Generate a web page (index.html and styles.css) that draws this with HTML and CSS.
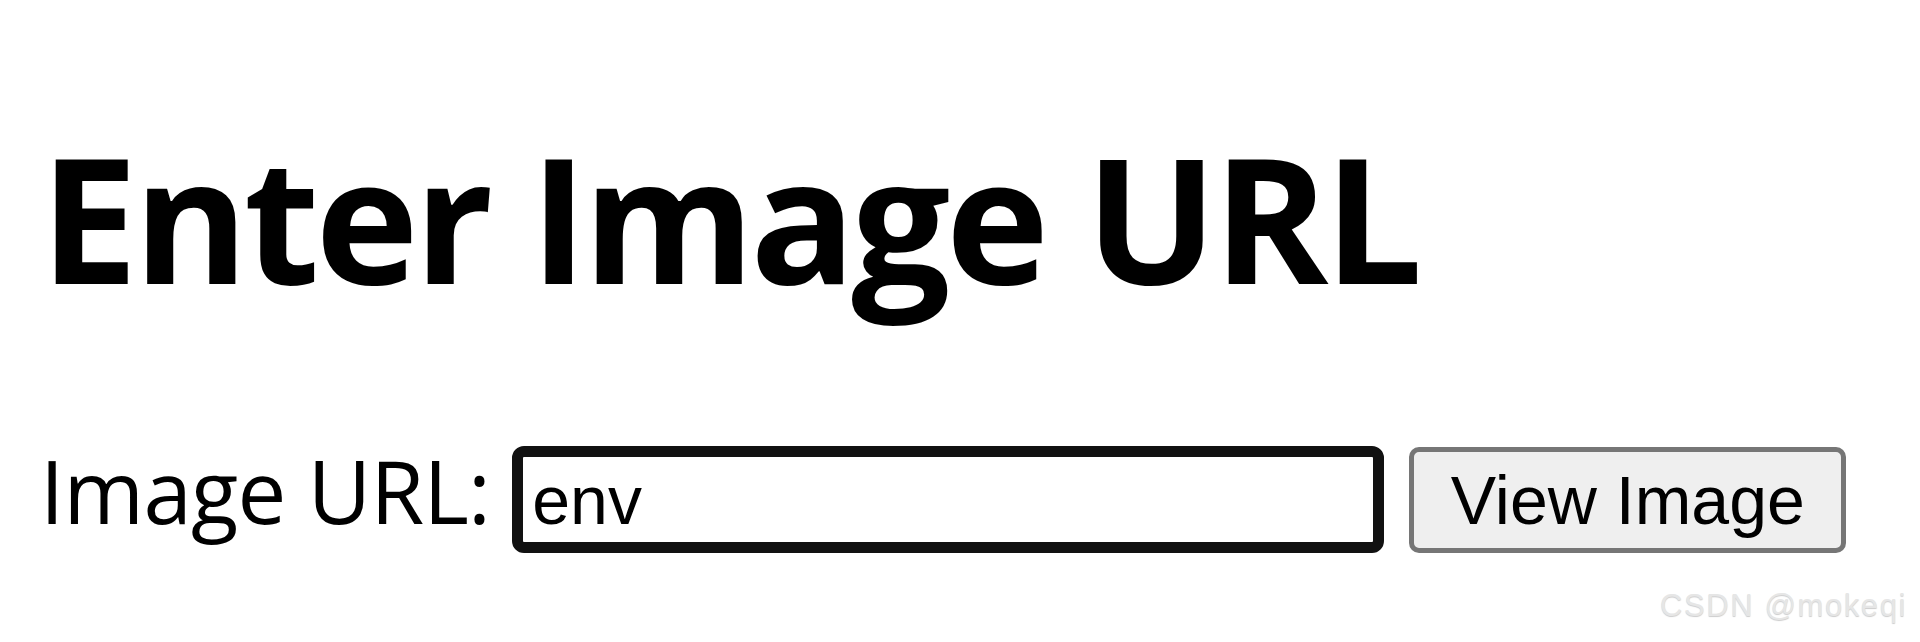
FILE: index.html
```html
<!DOCTYPE html>
<html lang="en">
<head>
<meta charset="utf-8">
<title>Enter Image URL</title>
<link rel="stylesheet" href="styles.css">
</head>
<body>
<main class="page">
  <h1 class="title">Enter Image URL</h1>
  <form class="url-form">
    <label class="url-label" for="url">Image URL:</label>
    <input class="url-input" id="url" type="text" value="env">
    <button class="view-btn" type="button">View Image</button>
  </form>
</main>
<div class="watermark">CSDN @mokeqi</div>
</body>
</html>
```
FILE: styles.css
```css
html, body {
  margin: 0;
  padding: 0;
  background: #ffffff;
}
body {
  width: 1920px;
  height: 642px;
  overflow: hidden;
  position: relative;
  color: #000;
}
.page {
  padding: 129px 0 0 40px;
}
.title {
  margin: 0;
  font-family: "Open Sans", "Noto Sans", sans-serif;
  font-weight: 700;
  font-size: 175px;
  line-height: 175px;
  letter-spacing: -4.6px;
  white-space: nowrap;
}
.url-form {
  display: flex;
  align-items: flex-start;
  margin-top: 142px;
}
.url-label {
  font-family: "Open Sans", "Noto Sans", sans-serif;
  font-size: 87px;
  line-height: 87px;
  letter-spacing: -0.7px;
  margin-top: 1px;
  margin-right: 22px;
  white-space: nowrap;
}
.url-input {
  box-sizing: border-box;
  width: 872px;
  height: 107px;
  border: 11px solid #111111;
  border-radius: 12px;
  padding: 0 0 0 9px;
  margin: 0;
  outline: none;
  background: #fff;
  font-family: "Liberation Sans", Arial, sans-serif;
  font-size: 68px;
  color: #000;
}
.view-btn {
  box-sizing: border-box;
  width: 437px;
  height: 106px;
  margin: 1px 0 0 25px;
  padding: 0;
  border: 5px solid #767676;
  border-radius: 10px;
  background: #efefef;
  font-family: "Liberation Sans", Arial, sans-serif;
  font-size: 68px;
  color: #000;
}
.watermark {
  position: absolute;
  right: 13px;
  top: 588px;
  font-family: "Liberation Sans", Arial, sans-serif;
  font-size: 31px;
  line-height: 36px;
  letter-spacing: 1.6px;
  color: #e6e6e6;
  text-shadow: 0 1px 1px rgba(0, 0, 0, 0.2);
}
```
